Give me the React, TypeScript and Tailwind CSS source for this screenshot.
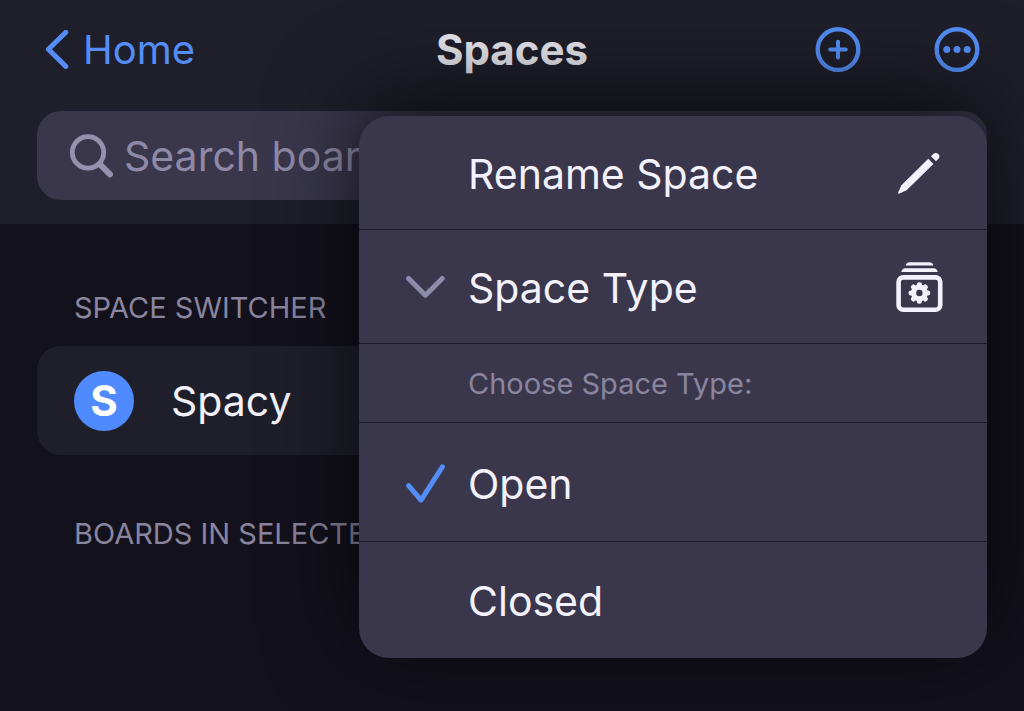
import type { ReactNode } from "react";

function ChevronLeft() {
  return (
    <svg width="24" height="40" viewBox="0 0 24 40" fill="none" stroke="currentColor" strokeWidth="5" strokeLinecap="round" strokeLinejoin="round" aria-hidden="true">
      <path d="M20.8 2.2 3.4 19.2l17.4 17.2" />
    </svg>
  );
}

function PlusCircle() {
  return (
    <svg width="46" height="46" viewBox="0 0 46 46" fill="none" stroke="currentColor" strokeWidth="4.4" strokeLinecap="round" aria-hidden="true">
      <circle cx="23" cy="22.6" r="20.3" />
      <path d="M23 14.8v15.6M15.2 22.6h15.6" strokeWidth="4" />
    </svg>
  );
}

function MoreCircle() {
  return (
    <svg width="46" height="46" viewBox="0 0 46 46" aria-hidden="true">
      <circle cx="23" cy="22.6" r="20.3" fill="none" stroke="currentColor" strokeWidth="4.4" />
      <g fill="currentColor">
        <circle cx="12.8" cy="22.6" r="3.5" />
        <circle cx="23" cy="22.6" r="3.5" />
        <circle cx="33.2" cy="22.6" r="3.5" />
      </g>
    </svg>
  );
}

function SearchIcon() {
  return (
    <svg width="44" height="44" viewBox="0 0 44 44" fill="none" stroke="currentColor" aria-hidden="true">
      <circle cx="19" cy="18.4" r="15.7" strokeWidth="4.8" />
      <path d="m31 30.4 10 10" strokeWidth="6" strokeLinecap="round" />
    </svg>
  );
}

function PencilIcon() {
  return (
    <svg width="48" height="48" viewBox="0 0 48 48" fill="currentColor" aria-hidden="true">
      <path d="M32.3 9.8 37.4 14.9 10.6 41.3 3.6 44.6Q1.6 45 2.2 43.2L5.4 36.2Z" />
      <path d="M35 7.3 37.2 5Q39.8 2.8 42.3 5T42.2 10L40 12.2Z" />
    </svg>
  );
}

const GEAR_TEETH = [0, 45, 90, 135, 180, 225, 270, 315];

function StackGearIcon() {
  return (
    <svg width="48" height="52" viewBox="0 0 48 52" aria-hidden="true">
      <g fill="currentColor">
        <path d="M9.6 4.4Q10.6 1.2 13.6 1.2H33.4Q36.4 1.2 37.4 4.4Z" />
        <path d="M5.2 11Q6.2 7.2 9.2 7.2H37.8Q40.8 7.2 41.8 11Z" />
        <circle cx="23.4" cy="32" r="8.4" />
        {GEAR_TEETH.map((angle) => (
          <rect key={angle} x="20.9" y="21.2" width="5" height="6" rx="2" transform={`rotate(${angle} 23.4 32)`} />
        ))}
      </g>
      <circle cx="23.4" cy="32" r="3.2" fill="#3a374d" />
      <rect x="2.6" y="16.4" width="41.6" height="32.4" rx="4.6" fill="none" stroke="currentColor" strokeWidth="4.6" />
    </svg>
  );
}

function ChevronDown() {
  return (
    <svg width="40" height="24" viewBox="0 0 40 24" fill="none" stroke="currentColor" strokeWidth="5" strokeLinecap="round" strokeLinejoin="round" aria-hidden="true">
      <path d="M3.6 3.4 20.4 20.2 37.2 3.4" />
    </svg>
  );
}

function CheckIcon() {
  return (
    <svg width="40" height="40" viewBox="0 0 40 40" fill="none" stroke="currentColor" strokeWidth="5" strokeLinecap="round" strokeLinejoin="round" aria-hidden="true">
      <path d="M3.6 22.6 16 37.2 37.4 3.8" />
    </svg>
  );
}

type MenuRowProps = { label: string; height: string; leading?: ReactNode; trailing?: ReactNode; checked?: boolean };

function MenuRow({ label, height, leading, trailing, checked }: MenuRowProps) {
  return (
    <button
      type="button"
      role={checked === undefined ? "menuitem" : "menuitemradio"}
      aria-checked={checked}
      className={`flex w-full items-center pr-[43px] pl-[46px] text-left text-[41px] text-[#f3f1fb] ${height}`}
    >
      <span className="flex w-[63px] shrink-0">{leading}</span>
      <span className="flex-1 pt-[3px]">{label}</span>
      {trailing}
    </button>
  );
}

export default function App() {
  return (
    <div className="relative min-h-screen overflow-hidden bg-[#13111c] font-['Inter',sans-serif] leading-none">
      <header className="bg-[#1f1f2b] px-[37px] pb-6">
        <div className="grid h-[111px] grid-cols-[1fr_auto_1fr] items-center pb-3">
          <a href="#home" className="flex items-center gap-[14px] pl-2 text-[40px] text-[#538df5]">
            <ChevronLeft />
            Home
          </a>
          <h1 className="text-[42px] font-bold text-[#e6e4ec]">Spaces</h1>
          <div className="flex items-center justify-end gap-[73px] pr-[7px] text-[#538df5]">
            <button type="button" aria-label="Add space">
              <PlusCircle />
            </button>
            <button type="button" aria-label="More options">
              <MoreCircle />
            </button>
          </div>
        </div>
        <label className="flex h-[89px] items-center gap-[11px] rounded-[24px] bg-[#3a374d] px-8 text-[#9490ae]">
          <SearchIcon />
          <input
            type="search"
            aria-label="Search boards"
            placeholder="Search boards"
            className="h-14 min-w-0 flex-1 bg-transparent text-[41px] outline-none placeholder:text-[#8d89a6]"
          />
        </label>
      </header>

      <main className="px-[37px] pt-[70px]">
        <h2 className="px-[37px] text-[29px] leading-7 text-[#89859f]">SPACE SWITCHER</h2>
        <button type="button" className="mt-6 flex h-[109px] w-full items-center gap-[37px] rounded-[24px] bg-[#1f1f2b] px-[37px] text-[41px] text-[#f3f1fb]">
          <span className="flex size-[60px] items-center justify-center rounded-full bg-[#4f8bff] text-[42px] font-bold text-white">S</span>
          <span className="pt-[2px]">Spacy</span>
        </button>
        <h2 className="mt-[65px] px-[37px] text-[29px] leading-7 text-[#89859f]">BOARDS IN SELECTED SPACE</h2>
      </main>

      <div
        role="menu"
        className="absolute top-[116px] right-[37px] w-[628px] divide-y divide-[#1d1a2b] overflow-hidden rounded-[30px] bg-[#3a374d] shadow-[0_-16px_90px_rgba(0,0,0,0.7)]"
      >
        <MenuRow label="Rename Space" height="h-[114px]" trailing={<PencilIcon />} />
        <MenuRow
          label="Space Type"
          height="h-[114px]"
          leading={<span className="text-[#8f8bab]"><ChevronDown /></span>}
          trailing={<StackGearIcon />}
        />
        <p className="flex h-[79px] items-center pl-[109px] text-[29px] text-[#89859f]">Choose Space Type:</p>
        <MenuRow
          label="Open"
          height="h-[119px] pt-[2px]"
          checked
          leading={<span className="text-[#538df5]"><CheckIcon /></span>}
        />
        <MenuRow label="Closed" height="h-[116px]" checked={false} />
      </div>
    </div>
  );
}
